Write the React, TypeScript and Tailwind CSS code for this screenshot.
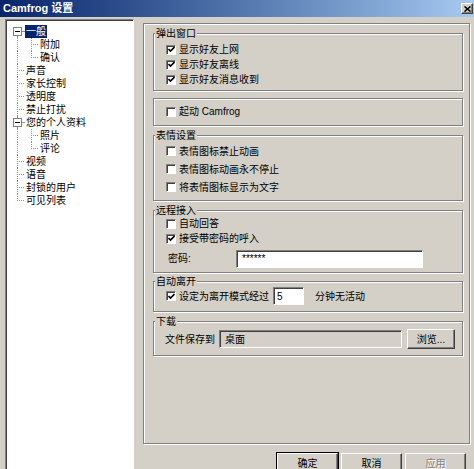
import React from 'react';

type Node = { t: string; lvl: 0 | 1; exp?: boolean; sel?: boolean; last?: boolean; first?: boolean };

const tree: Node[] = [
  { t: '一般', lvl: 0, exp: true, sel: true, first: true },
  { t: '附加', lvl: 1 },
  { t: '确认', lvl: 1, last: true },
  { t: '声音', lvl: 0 },
  { t: '家长控制', lvl: 0 },
  { t: '透明度', lvl: 0 },
  { t: '禁止打扰', lvl: 0 },
  { t: '您的个人资料', lvl: 0, exp: true },
  { t: '照片', lvl: 1 },
  { t: '评论', lvl: 1, last: true },
  { t: '视频', lvl: 0 },
  { t: '语音', lvl: 0 },
  { t: '封锁的用户', lvl: 0 },
  { t: '可见列表', lvl: 0, last: true },
];

const VLine: React.FC<{ cls: string }> = ({ cls }) => (
  <div className={`absolute w-0 border-l border-dotted border-[#909090] ${cls}`} />
);

const HLine: React.FC<{ cls: string }> = ({ cls }) => (
  <div className={`absolute h-0 border-t border-dotted border-[#909090] ${cls}`} />
);

const TreeRow: React.FC<{ n: Node }> = ({ n }) => {
  let vline = 'left-[5px] top-0 bottom-0';
  if (n.lvl === 0 && n.last) vline = 'left-[5px] top-0 h-[7px]';
  return (
    <div className="flex h-[13px] items-center">
      <div className="relative w-[12px] h-[13px] shrink-0">
        {n.exp ? (
          <>
            {!n.first && <VLine cls="left-[5px] top-0 h-[2px]" />}
            <VLine cls="left-[5px] top-[11px] bottom-0" />
            <div className="absolute left-[1px] top-[2px] w-[9px] h-[9px] border border-[#808080] bg-white">
              <div className="absolute left-[1px] top-[3px] w-[5px] h-px bg-black" />
            </div>
            <HLine cls="left-[10px] top-[6px] w-[2px]" />
          </>
        ) : (
          <>
            <VLine cls={vline} />
            {n.lvl === 0 && <HLine cls="left-[5px] top-[6px] w-[7px]" />}
          </>
        )}
      </div>
      {n.lvl === 1 && (
        <div className="relative w-[14px] h-[13px] shrink-0">
          <VLine cls={n.last ? 'left-[7px] top-0 h-[7px]' : 'left-[7px] top-0 bottom-0'} />
          <HLine cls="left-[7px] top-[6px] w-[7px]" />
        </div>
      )}
      <span
        className={
          n.sel
            ? 'ml-[1px] px-[1px] h-[13px] leading-[13px] bg-[#0a246a] text-white'
            : 'ml-[1px] px-[1px] h-[13px] leading-[13px]'
        }
      >
        {n.t}
      </span>
    </div>
  );
};

const Check: React.FC<{ on?: boolean }> = ({ on }) => (
  <div className="w-[10px] h-[10px] shrink-0 bg-white border-t border-l border-[#808080] border-b border-r border-b-white border-r-white shadow-[inset_1px_1px_0_#404040] flex items-center justify-center">
    {on && (
      <svg width="7" height="7" viewBox="0 0 7 7">
        <path d="M0.5 3 L2.5 5 L6.5 1" stroke="#000" strokeWidth="1.6" fill="none" />
      </svg>
    )}
  </div>
);

const CheckRow: React.FC<{ on?: boolean; text: string; cls: string }> = ({ on, text, cls }) => (
  <div className={`flex items-center pl-[12px] ${cls}`}>
    <Check on={on} />
    <span className="ml-[3px]">{text}</span>
  </div>
);

const Group: React.FC<{ label?: string; cls: string; children: React.ReactNode }> = ({ label, cls, children }) => (
  <div className={`w-[310px] border border-[#808080] shadow-[1px_1px_0_#fff,inset_1px_1px_0_#fff] ${cls}`}>
    {label && <div className="-mt-[7px] ml-[1px] w-fit px-[1px] h-[13px] leading-[13px] bg-[#d4d0c8]">{label}</div>}
    {children}
  </div>
);

const sunken =
  'border-t border-l border-[#808080] border-b border-r border-b-white border-r-white shadow-[inset_1px_1px_0_#404040]';

const raised =
  'border-t border-l border-white border-b border-r border-b-[#404040] border-r-[#404040] shadow-[inset_-1px_-1px_0_#808080]';

export default function App() {
  return (
    <div className="w-[474px] h-[469px] overflow-hidden bg-[#d4d0c8] flex flex-col text-[10px] leading-[13px] text-black font-['Liberation_Sans','Noto_Sans_CJK_SC',sans-serif]">
      <div className="h-[17px] shrink-0 flex items-center justify-between pl-[3px] pr-[1px] bg-gradient-to-r from-[#0a246a] to-[#a6caf0]">
        <span className="text-white font-bold text-[11px]">Camfrog 设置</span>
        <div className={`w-[12px] h-[11px] bg-[#d4d0c8] flex items-center justify-center ${raised}`}>
          <svg width="7" height="6" viewBox="0 0 7 6">
            <path d="M0.5 0.5 L6.5 5.5 M6.5 0.5 L0.5 5.5" stroke="#000" strokeWidth="1.6" />
          </svg>
        </div>
      </div>

      <div className="flex pl-[5px]">
        <div className={`mt-[2px] w-[129px] h-[460px] shrink-0 bg-white pt-[5px] pl-[6px] ${sunken}`}>
          {tree.map((n) => (
            <TreeRow key={n.t} n={n} />
          ))}
        </div>

        <div className="ml-[9px] mt-[6px] w-[327px] flex flex-col">
          <div className="h-[421px] border border-[#808080] shadow-[1px_1px_0_#fff,inset_1px_1px_0_#fff] pl-[9px] pt-[9px]">
            <Group label="弹出窗口" cls="h-[58px]">
              <div className="mt-[2px]">
                <CheckRow on text="显示好友上网" cls="h-[15px]" />
                <CheckRow on text="显示好友离线" cls="h-[15px]" />
                <CheckRow on text="显示好友消息收到" cls="h-[15px]" />
              </div>
            </Group>

            <Group cls="h-[28px] mt-[7px] pt-[5px]">
              <CheckRow text="起动 Camfrog" cls="h-[15px]" />
            </Group>

            <Group label="表情设置" cls="h-[66px] mt-[9px]">
              <CheckRow text="表情图标禁止动画" cls="h-[18px]" />
              <CheckRow text="表情图标动画永不停止" cls="h-[18px]" />
              <CheckRow text="将表情图标显示为文字" cls="h-[18px]" />
            </Group>

            <Group label="远程接入" cls="h-[63px] mt-[9px]">
              <CheckRow text="自动回答" cls="h-[13px]" />
              <CheckRow on text="接受带密码的呼入" cls="h-[15px] mt-[1px]" />
              <div className="flex items-center pl-[14px] mt-[3px] h-[19px]">
                <span className="w-[68px]">密码:</span>
                <div className={`w-[187px] h-[18px] bg-white pl-[5px] flex items-center ${sunken}`}>******</div>
              </div>
            </Group>

            <Group label="自动离开" cls="h-[31px] mt-[8px]">
              <div className="flex items-center pl-[12px] -mt-[1px] h-[18px]">
                <Check on />
                <span className="ml-[3px]">设定为离开模式经过</span>
                <div className={`ml-[4px] w-[31px] h-[18px] bg-white pl-[3px] flex items-center ${sunken}`}>5</div>
                <span className="ml-[11px]">分钟无活动</span>
              </div>
            </Group>

            <Group label="下载" cls="h-[35px] mt-[9px]">
              <div className="flex items-center pl-[11px] mt-[1px] h-[20px]">
                <span>文件保存到</span>
                <div className={`ml-[4px] w-[183px] h-[18px] bg-[#d4d0c8] pl-[5px] flex items-center ${sunken}`}>桌面</div>
                <button className={`ml-[5px] w-[48px] h-[20px] bg-[#d4d0c8] flex items-center justify-center ${raised}`}>
                  浏览...
                </button>
              </div>
            </Group>
          </div>

          <div className="mt-[9px] flex gap-[3px] pl-[134px]">
            <button className={`w-[61px] h-[20px] bg-[#d4d0c8] flex items-center justify-center ${raised} outline outline-1 outline-black`}>
              确定
            </button>
            <button className={`w-[61px] h-[20px] bg-[#d4d0c8] flex items-center justify-center ${raised}`}>取消</button>
            <button className={`w-[61px] h-[20px] bg-[#d4d0c8] flex items-center justify-center text-[#808080] [text-shadow:1px_1px_0_#fff] ${raised}`}>
              应用
            </button>
          </div>
        </div>
      </div>
    </div>
  );
}
